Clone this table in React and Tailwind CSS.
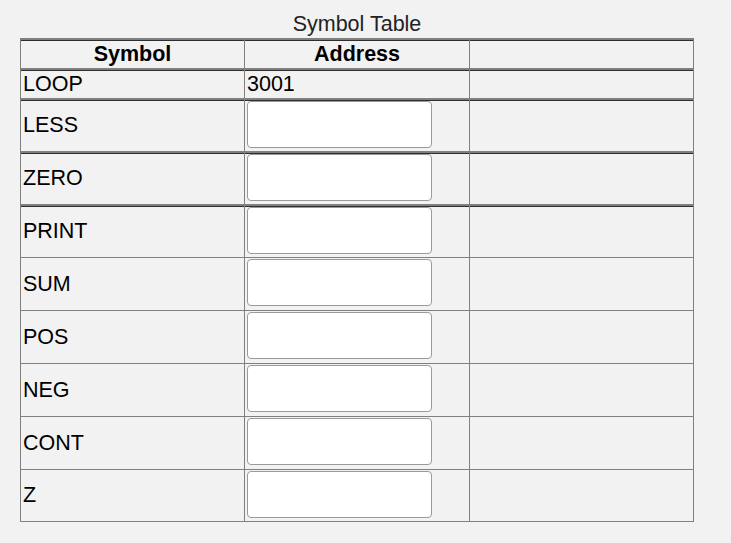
import React from "react";

const symbols = ["LESS", "ZERO", "PRINT", "SUM", "POS", "NEG", "CONT", "Z"];

// rows drawn with a darker rule on top
const darkRule = "border-t-2 border-t-[#808080] shadow-[inset_0_1px_0_#2e2e2e]";

export default function App() {
  return (
    <div className="min-h-[543px] w-[731px] bg-[#f2f2f2] pt-[10px] font-['Liberation_Sans',Arial,sans-serif] text-[21.5px] text-black">
      <div className="ml-[20px] w-[674px] text-center leading-[28px] text-[#222]">Symbol Table</div>
      <div className="ml-[20px] w-[674px]">
        {/* header */}
        <div className={`flex h-[30px] ${darkRule}`}>
          <div className="w-[225px] border-l border-r border-[#808080] text-center font-bold leading-[28px]">Symbol</div>
          <div className="w-[225px] border-r border-[#808080] text-center font-bold leading-[28px]">Address</div>
          <div className="w-[224px] border-r border-[#808080]"></div>
        </div>
        {/* first known row */}
        <div className={`flex h-[30px] ${darkRule}`}>
          <div className="w-[225px] border-l border-r border-[#808080] pl-[2px] leading-[28px]">LOOP</div>
          <div className="w-[225px] border-r border-[#808080] pl-[2px] leading-[28px]">3001</div>
          <div className="w-[224px] border-r border-[#808080]"></div>
        </div>
        {symbols.map((s, i) => {
          const dark = i < 3;
          return (
            <div
              key={s}
              className={`flex h-[53px] ${dark ? darkRule : "border-t border-[#808080]"} ${i === symbols.length - 1 ? "border-b" : ""}`}
            >
              <div className="flex w-[225px] items-center border-l border-r border-[#808080] pl-[2px]">{s}</div>
              <div className="w-[225px] border-r border-[#808080] pl-[2px] pt-[1px]">
                <input
                  type="text"
                  className="h-[47px] w-[185px] rounded-[4px] border border-[#9a9a9a] bg-white px-1 outline-none"
                />
              </div>
              <div className="w-[224px] border-r border-[#808080]"></div>
            </div>
          );
        })}
      </div>
    </div>
  );
}
